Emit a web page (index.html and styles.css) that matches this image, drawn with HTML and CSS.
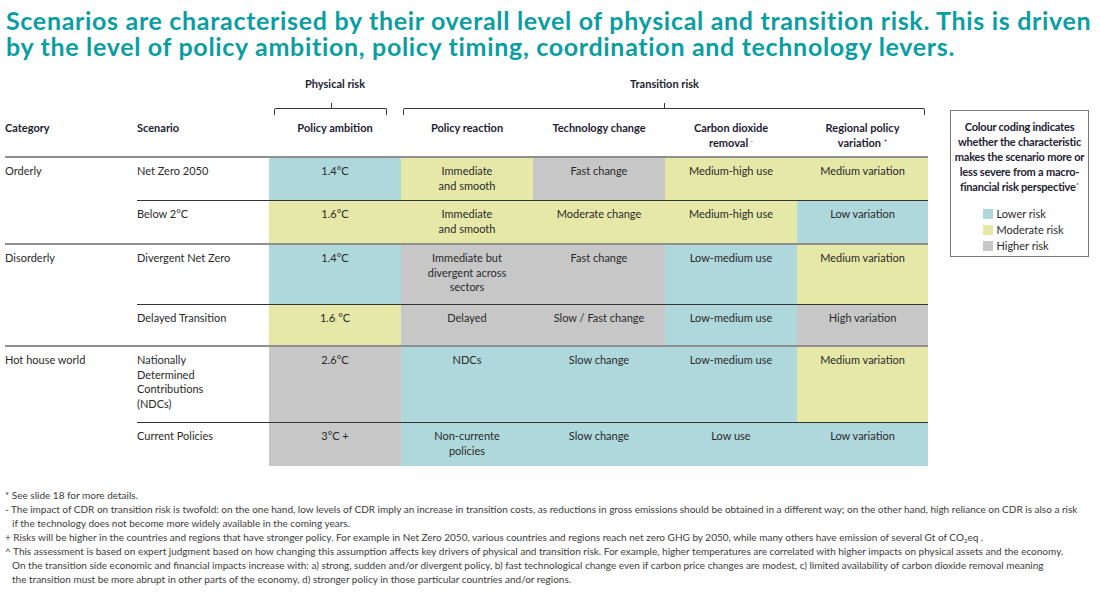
FILE: index.html
```html
<!DOCTYPE html>
<html lang="en">
<head>
<meta charset="utf-8">
<title>Scenarios</title>
<link rel="stylesheet" href="styles.css">
</head>
<body>
<div class="page">
  <h1 class="title"><span class="tl">Scenarios are characterised by their overall level of physical and transition risk. This is driven</span><span class="tl">by the level of policy ambition, policy timing, coordination and technology levers.</span></h1>

  <div class="main">
    <div class="grid">
      <div class="group g-phys">Physical risk</div>
      <div class="group g-trans">Transition risk</div>
      <div class="brace-cell b-phys"><div class="brace"></div></div>
      <div class="brace-cell b-trans"><div class="brace"></div></div>

      <div class="hd left">Category</div>
      <div class="hd left">Scenario</div>
      <div class="hd">Policy ambition</div>
      <div class="hd">Policy reaction</div>
      <div class="hd">Technology change</div>
      <div class="hd">Carbon dioxide<br>removal <sup>-</sup></div>
      <div class="hd">Regional policy<br>variation <sup>+</sup></div>
      <div class="line thick full"></div>

      <div class="cat span3">Orderly</div>
      <div class="scen">Net Zero 2050</div>
      <div class="c blue">1.4°C</div>
      <div class="c yellow">Immediate<br>and smooth</div>
      <div class="c grey">Fast change</div>
      <div class="c yellow">Medium-high use</div>
      <div class="c yellow">Medium variation</div>
      <div class="line thin part"></div>
      <div class="scen">Below 2°C</div>
      <div class="c yellow">1.6°C</div>
      <div class="c yellow">Immediate<br>and smooth</div>
      <div class="c yellow">Moderate change</div>
      <div class="c yellow">Medium-high use</div>
      <div class="c blue">Low variation</div>
      <div class="line thick full"></div>

      <div class="cat span3">Disorderly</div>
      <div class="scen">Divergent Net Zero</div>
      <div class="c blue">1.4°C</div>
      <div class="c grey">Immediate but<br>divergent across<br>sectors</div>
      <div class="c grey">Fast change</div>
      <div class="c blue">Low-medium use</div>
      <div class="c yellow">Medium variation</div>
      <div class="line thin part"></div>
      <div class="scen">Delayed Transition</div>
      <div class="c yellow">1.6 °C</div>
      <div class="c grey">Delayed</div>
      <div class="c grey">Slow / Fast change</div>
      <div class="c blue">Low-medium use</div>
      <div class="c grey">High variation</div>
      <div class="line thick full"></div>

      <div class="cat span3">Hot house world</div>
      <div class="scen">Nationally<br>Determined<br>Contributions<br>(NDCs)</div>
      <div class="c grey">2.6°C</div>
      <div class="c blue">NDCs</div>
      <div class="c blue">Slow change</div>
      <div class="c blue">Low-medium use</div>
      <div class="c yellow">Medium variation</div>
      <div class="line thin part"></div>
      <div class="scen">Current Policies</div>
      <div class="c grey">3°C +</div>
      <div class="c blue">Non-currente<br>policies</div>
      <div class="c blue">Slow change</div>
      <div class="c blue">Low use</div>
      <div class="c blue">Low variation</div>
    </div>

    <div class="legend">
      <p class="legend-title">Colour coding indicates<br>whether the characteristic<br>makes the scenario more or<br>less severe from a macro-<br>financial risk perspective<sup>^</sup></p>
      <ul class="keys">
        <li><span class="sw blue"></span>Lower risk</li>
        <li><span class="sw yellow"></span>Moderate risk</li>
        <li><span class="sw grey"></span>Higher risk</li>
      </ul>
    </div>
  </div>

  <div class="notes">
    <p class="note">* See slide 18 for more details.</p>
    <p class="note">- The impact of CDR on transition risk is twofold: on the one hand, low levels of CDR imply an increase in transition costs, as reductions in gross emissions should be obtained in a different way; on the other hand, high reliance on CDR is also a risk<br>if the technology does not become more widely available in the coming years.</p>
    <p class="note">+ Risks will be higher in the countries and regions that have stronger policy. For example in Net Zero 2050, various countries and regions reach net zero GHG by 2050, while many others have emission of several Gt of CO<sub>2</sub>eq .</p>
    <p class="note">^ This assessment is based on expert judgment based on how changing this assumption affects key drivers of physical and transition risk. For example, higher temperatures are correlated with higher impacts on physical assets and the economy.<br>On the transition side economic and financial impacts increase with: a) strong, sudden and/or divergent policy, b) fast technological change even if carbon price changes are modest, c) limited availability of carbon dioxide removal meaning<br>the transition must be more abrupt in other parts of the economy, d) stronger policy in those particular countries and/or regions.</p>
  </div>
</div>
</body>
</html>
```

FILE: styles.css
```css
* { box-sizing: border-box; }
html, body { margin: 0; padding: 0; background: #fff; }
body {
  font-family: Lato, "Open Sans", "Liberation Sans", sans-serif;
  color: #2a2a2a;
}
.page { width: 1100px; height: 592px; padding: 7px 0 0 5px; overflow: hidden; }

.title {
  margin: 0 0 17px 1px;
  font-family: Lato, "Liberation Sans", sans-serif;
  font-weight: 700;
  font-size: 25px;
  letter-spacing: 0.68px;
  color: #0a9ea3;
  white-space: nowrap;
}
.tl { display: block; height: 26px; line-height: 26px; }

.main { display: flex; align-items: flex-start; gap: 22px; }

.grid {
  display: grid;
  grid-template-columns: repeat(6, 132px) 131px;
  grid-template-rows: 16px 24px 40px 2px 42px 1px 42px 2px 59px 1px 40px 2px 75px 1px 43px;
  font-size: 11px;
  line-height: 14.6px;
}

.group { font-weight: 700; text-align: center; color: #1e2233; line-height: 16px; }
.g-phys { grid-column: 3; }
.g-trans { grid-column: 4 / -1; }
.brace-cell { padding-top: 16px; }
.b-phys { grid-column: 3; padding-left: 5px; padding-right: 14px; }
.b-trans { grid-column: 4 / -1; padding-left: 2px; padding-right: 3px; }
.brace {
  position: relative;
  height: 7px;
  border: 1.3px solid #3a3a3a;
  border-bottom: 0;
  border-radius: 2px 2px 0 0;
}
.brace::after {
  content: "";
  position: absolute;
  left: 50%;
  top: -6px;
  width: 1.3px;
  height: 5px;
  background: #3a3a3a;
}

.hd { font-weight: 700; text-align: center; color: #1e2233; padding-top: 5px; }
.hd.left { text-align: left; }
.hd sup, .legend-title sup { font-size: 6px; vertical-align: 4px; line-height: 0; font-weight: 400; }

.line.full { grid-column: 1 / -1; }
.line.part { grid-column: 2 / -1; }
.line.thick { background: #8f8f8f; }
.line.thin { background: #333; }

.cat { grid-row: span 3; padding-top: 6px; }
.scen { padding-top: 6px; }
.c { text-align: center; padding-top: 6px; }
.blue { background: #afd8dd; }
.yellow { background: #e6e8a8; }
.grey { background: #c7c7c7; }

.legend {
  margin-top: 34px;
  width: 139px;
  height: 147px;
  border: 1.3px solid #7a7a7a;
  text-align: center;
  padding-top: 8px;
}
.legend-title {
  margin: 0;
  font-size: 11px;
  line-height: 15px;
  font-weight: 700;
  letter-spacing: -0.2px;
  color: #1e2233;
  white-space: nowrap;
}
.keys {
  display: inline-block;
  list-style: none;
  margin: 12px 0 0 8px;
  padding: 0;
  text-align: left;
  font-size: 11px;
  line-height: 16px;
}
.keys li { display: flex; align-items: center; gap: 3px; }
.sw { display: inline-block; width: 10px; height: 10px; }

.notes { margin-top: 22px; font-size: 10px; line-height: 14px; color: #3c3c3c; }
.note { margin: 0; padding-left: 7px; text-indent: -7px; white-space: nowrap; }
.note sub { font-size: 6px; vertical-align: -2px; line-height: 0; }
```
